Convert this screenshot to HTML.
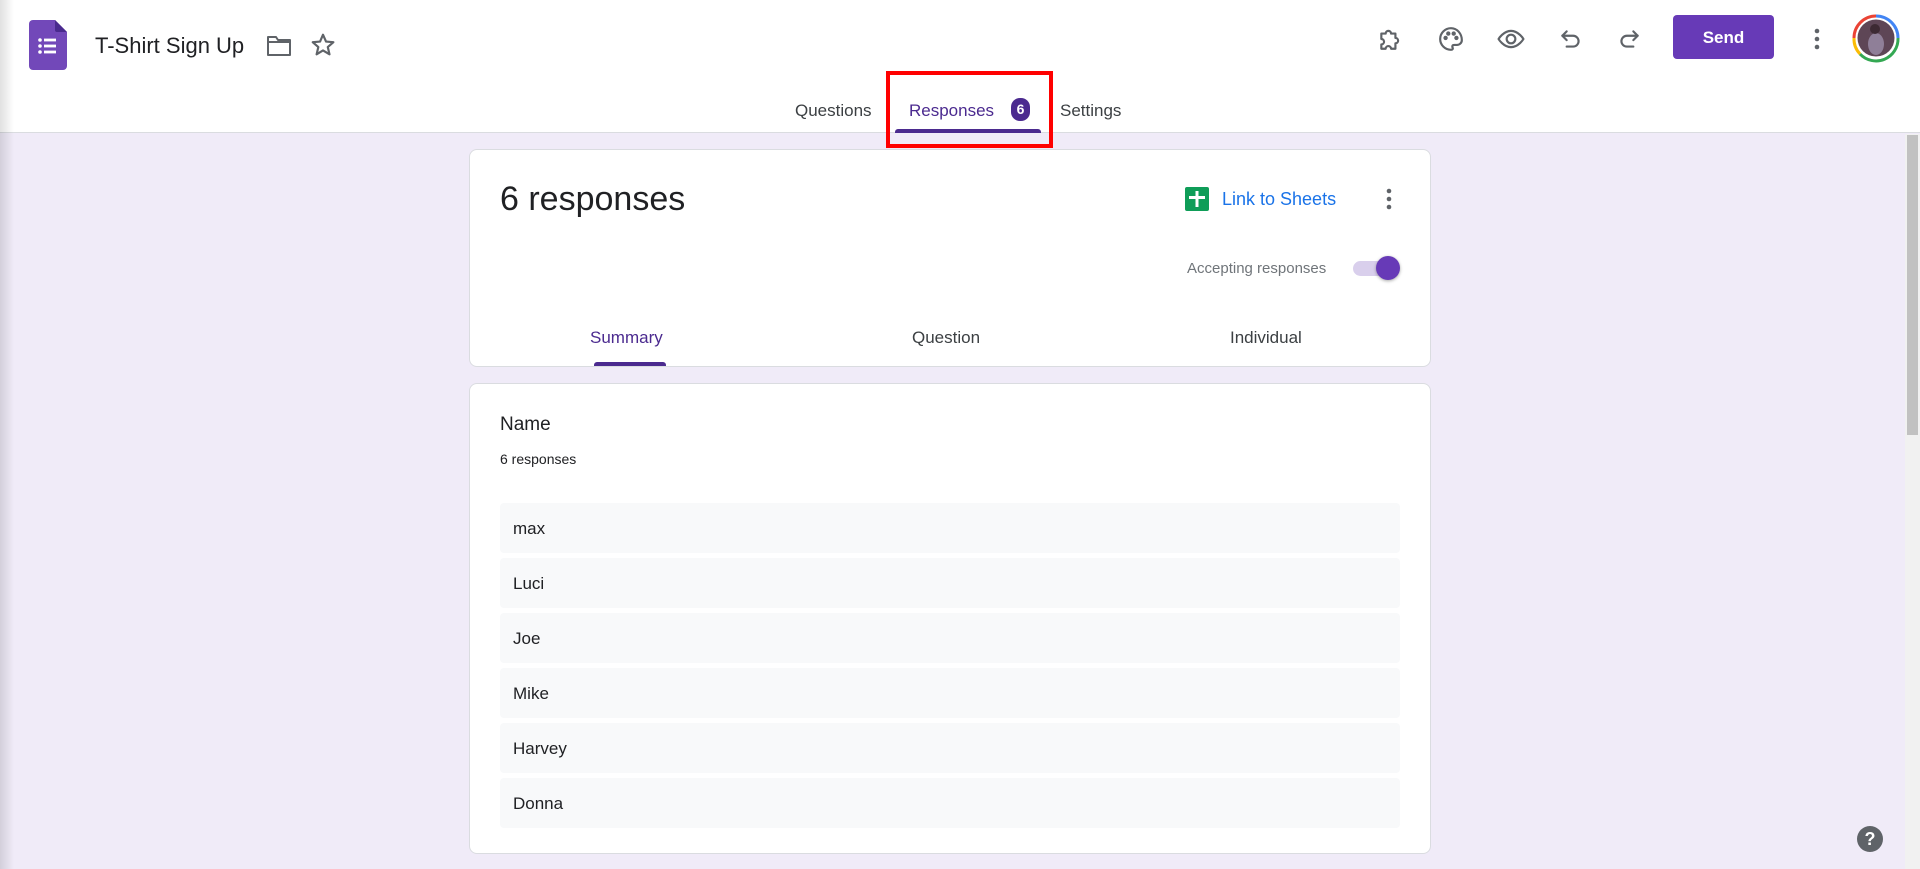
<!DOCTYPE html>
<html><head><meta charset="utf-8"><style>
*{box-sizing:border-box;margin:0;padding:0}
body{width:1920px;height:869px;overflow:hidden;background:#f0ebf8;font-family:"Liberation Sans",Arial,sans-serif;position:relative;color:#202124}
.a{position:absolute}
#hdr{left:0;top:0;width:1920px;height:133px;background:#fff;border-bottom:1px solid #dadce0}
.shade{left:0;top:0;width:14px;height:869px;background:linear-gradient(to right,rgba(0,0,0,.12),rgba(0,0,0,0))}
.ico{stroke:#5f6368;fill:none;stroke-width:2;stroke-linecap:round;stroke-linejoin:round}
.card{background:#fff;border:1px solid #dadce0;border-radius:8px}
.row{left:500px;width:900px;height:50px;background:#f8f9fa;border-radius:4px;font-size:17px;padding-left:13px;line-height:52px}
</style></head><body>
<div class="a" id="hdr"></div>
<div class="a shade"></div>
<svg class="a" style="left:29px;top:20px" width="38" height="50" viewBox="0 0 38 50"><path d="M4 0h22l12 12v34a4 4 0 0 1-4 4H4a4 4 0 0 1-4-4V4a4 4 0 0 1 4-4z" fill="#7248b9"/><path d="M26 0l12 12H28a2 2 0 0 1-2-2z" fill="#4a2a8e"/><g fill="#fff"><circle cx="11" cy="20" r="1.8"/><circle cx="11" cy="26" r="1.8"/><circle cx="11" cy="32" r="1.8"/><rect x="15" y="18.6" width="12" height="2.8"/><rect x="15" y="24.6" width="12" height="2.8"/><rect x="15" y="30.6" width="12" height="2.8"/></g></svg>
<div class="a" style="left:95px;top:33px;font-size:22px;color:#202124">T-Shirt Sign Up</div>
<svg class="a ico" style="left:266px;top:34px" width="26" height="24" viewBox="0 0 26 24"><path d="M2 3h8l2 3h12v15H2z"/><path d="M2 8h22"/></svg>
<svg class="a ico" style="left:310px;top:32px" width="26" height="26" viewBox="0 0 24 24"><path d="M12 2.5l2.8 6.3 6.8.6-5.2 4.5 1.6 6.7L12 17l-5.9 3.6 1.6-6.7-5.2-4.5 6.8-.6z"/></svg>
<svg class="a ico" style="left:1377px;top:26px" width="26" height="26" viewBox="0 0 24 24"><path d="M4 7h4a2.5 2.5 0 0 1 5 0h4v4a2.5 2.5 0 0 1 0 5v5h-4a2.5 2.5 0 0 0-5 0H4v-4a2.5 2.5 0 0 0 0-5z"/></svg>
<svg class="a ico" style="left:1438px;top:26px" width="26" height="26" viewBox="0 0 24 24"><path d="M12 2a10 10 0 0 0 0 20c1.5 0 2-1 1.5-2s-.5-2.5 1.5-2.5h2.5A4.5 4.5 0 0 0 22 13C22 7 17.5 2 12 2z"/><circle cx="7" cy="11" r="1" fill="#5f6368"/><circle cx="9.5" cy="7" r="1" fill="#5f6368"/><circle cx="14.5" cy="7" r="1" fill="#5f6368"/><circle cx="17" cy="11" r="1" fill="#5f6368"/></svg>
<svg class="a ico" style="left:1496px;top:26px" width="30" height="26" viewBox="0 0 26 24"><path d="M1.5 12S6 4.5 13 4.5 24.5 12 24.5 12 20 19.5 13 19.5 1.5 12 1.5 12z"/><circle cx="13" cy="12" r="4"/></svg>
<svg class="a ico" style="left:1558px;top:26px" width="26" height="26" viewBox="0 0 24 24"><path d="M8 5L4 9l4 4"/><path d="M4 9h10a5 5 0 0 1 0 10H8"/></svg>
<svg class="a ico" style="left:1616px;top:26px" width="26" height="26" viewBox="0 0 24 24"><path d="M16 5l4 4-4 4"/><path d="M20 9H10a5 5 0 0 0 0 10h6"/></svg>
<div class="a" style="left:1673px;top:15px;width:101px;height:44px;background:#673ab7;border-radius:4px;color:#fff;font-weight:bold;font-size:17px;text-align:center;line-height:45px">Send</div>
<svg class="a" style="left:1811px;top:26px" width="12" height="26"><circle cx="6" cy="5" r="2.3" fill="#5f6368"/><circle cx="6" cy="13" r="2.3" fill="#5f6368"/><circle cx="6" cy="21" r="2.3" fill="#5f6368"/></svg>
<svg class="a" style="left:1852px;top:14px" width="48" height="50" viewBox="0 0 48 50"><path d="M24 2a22 22 0 0 1 22 22" stroke="#4285f4" stroke-width="3" fill="none"/><path d="M46 24A22 22 0 0 1 8 40" stroke="#34a853" stroke-width="3" fill="none"/><path d="M8 40A22 22 0 0 1 2 24" stroke="#fbbc05" stroke-width="3" fill="none"/><path d="M2 24A22 22 0 0 1 24 2" stroke="#ea4335" stroke-width="3" fill="none"/><circle cx="24" cy="24" r="18.5" fill="#5e4656"/><ellipse cx="24" cy="30" rx="8" ry="11" fill="#8f7f98"/><circle cx="23" cy="15" r="5" fill="#3d2a33"/></svg>
<div class="a" style="left:795px;top:101px;font-size:17px;color:#3c4043">Questions</div>
<div class="a" style="left:909px;top:101px;font-size:17px;color:#4b2a8f">Responses</div>
<div class="a" style="left:1011px;top:98px;width:19px;height:23px;border-radius:9px;background:#4b2a8f;color:#fff;font-size:14px;text-align:center;line-height:23px;font-weight:bold">6</div>
<div class="a" style="left:1060px;top:101px;font-size:17px;color:#3c4043">Settings</div>
<div class="a" style="left:895px;top:129px;width:146px;height:4px;background:#4b2a8f;border-radius:3px 3px 0 0"></div>
<div class="a" style="left:886px;top:71px;width:167px;height:77px;border:4px solid #f00"></div>
<div class="a" style="left:1905px;top:134px;width:15px;height:735px;background:#f1f1f1"></div>
<div class="a" style="left:1907px;top:135px;width:11px;height:300px;background:#c1c1c1"></div>
<div class="a card" style="left:469px;top:149px;width:962px;height:218px"></div>
<div class="a" style="left:500px;top:180px;font-size:34px;color:#202124">6 responses</div>
<svg class="a" style="left:1185px;top:187px" width="24" height="24"><rect width="24" height="24" rx="2" fill="#0f9d58"/><rect x="4" y="9" width="16" height="3" fill="#fff"/><rect x="10.5" y="4" width="3" height="16" fill="#fff"/></svg>
<div class="a" style="left:1222px;top:189px;font-size:18px;color:#1a73e8">Link to Sheets</div>
<svg class="a" style="left:1383px;top:187px" width="12" height="26"><circle cx="6" cy="4" r="2.3" fill="#5f6368"/><circle cx="6" cy="12" r="2.3" fill="#5f6368"/><circle cx="6" cy="20" r="2.3" fill="#5f6368"/></svg>
<div class="a" style="left:1187px;top:260px;font-size:15px;color:#70757a">Accepting responses</div>
<div class="a" style="left:1353px;top:261px;width:40px;height:15px;border-radius:8px;background:#d9cfec"></div>
<div class="a" style="left:1376px;top:256px;width:24px;height:24px;border-radius:50%;background:#673ab7;box-shadow:0 1px 3px rgba(0,0,0,.35)"></div>
<div class="a" style="left:590px;top:328px;font-size:17px;color:#4b2a8f">Summary</div>
<div class="a" style="left:912px;top:328px;font-size:17px;color:#3c4043">Question</div>
<div class="a" style="left:1230px;top:328px;font-size:17px;color:#3c4043">Individual</div>
<div class="a" style="left:594px;top:362px;width:72px;height:4px;background:#4b2a8f;border-radius:3px 3px 0 0"></div>
<div class="a card" style="left:469px;top:383px;width:962px;height:471px"></div>
<div class="a" style="left:500px;top:414px;font-size:19px;color:#202124">Name</div>
<div class="a" style="left:500px;top:451px;font-size:14px;color:#202124">6 responses</div>
<div class="a row" style="top:503px">max</div>
<div class="a row" style="top:558px">Luci</div>
<div class="a row" style="top:613px">Joe</div>
<div class="a row" style="top:668px">Mike</div>
<div class="a row" style="top:723px">Harvey</div>
<div class="a row" style="top:778px">Donna</div>
<div class="a" style="left:1857px;top:826px;width:26px;height:26px;border-radius:50%;background:#5f6368;color:#fff;font-weight:bold;font-size:18px;text-align:center;line-height:26px">?</div>
</body></html>
